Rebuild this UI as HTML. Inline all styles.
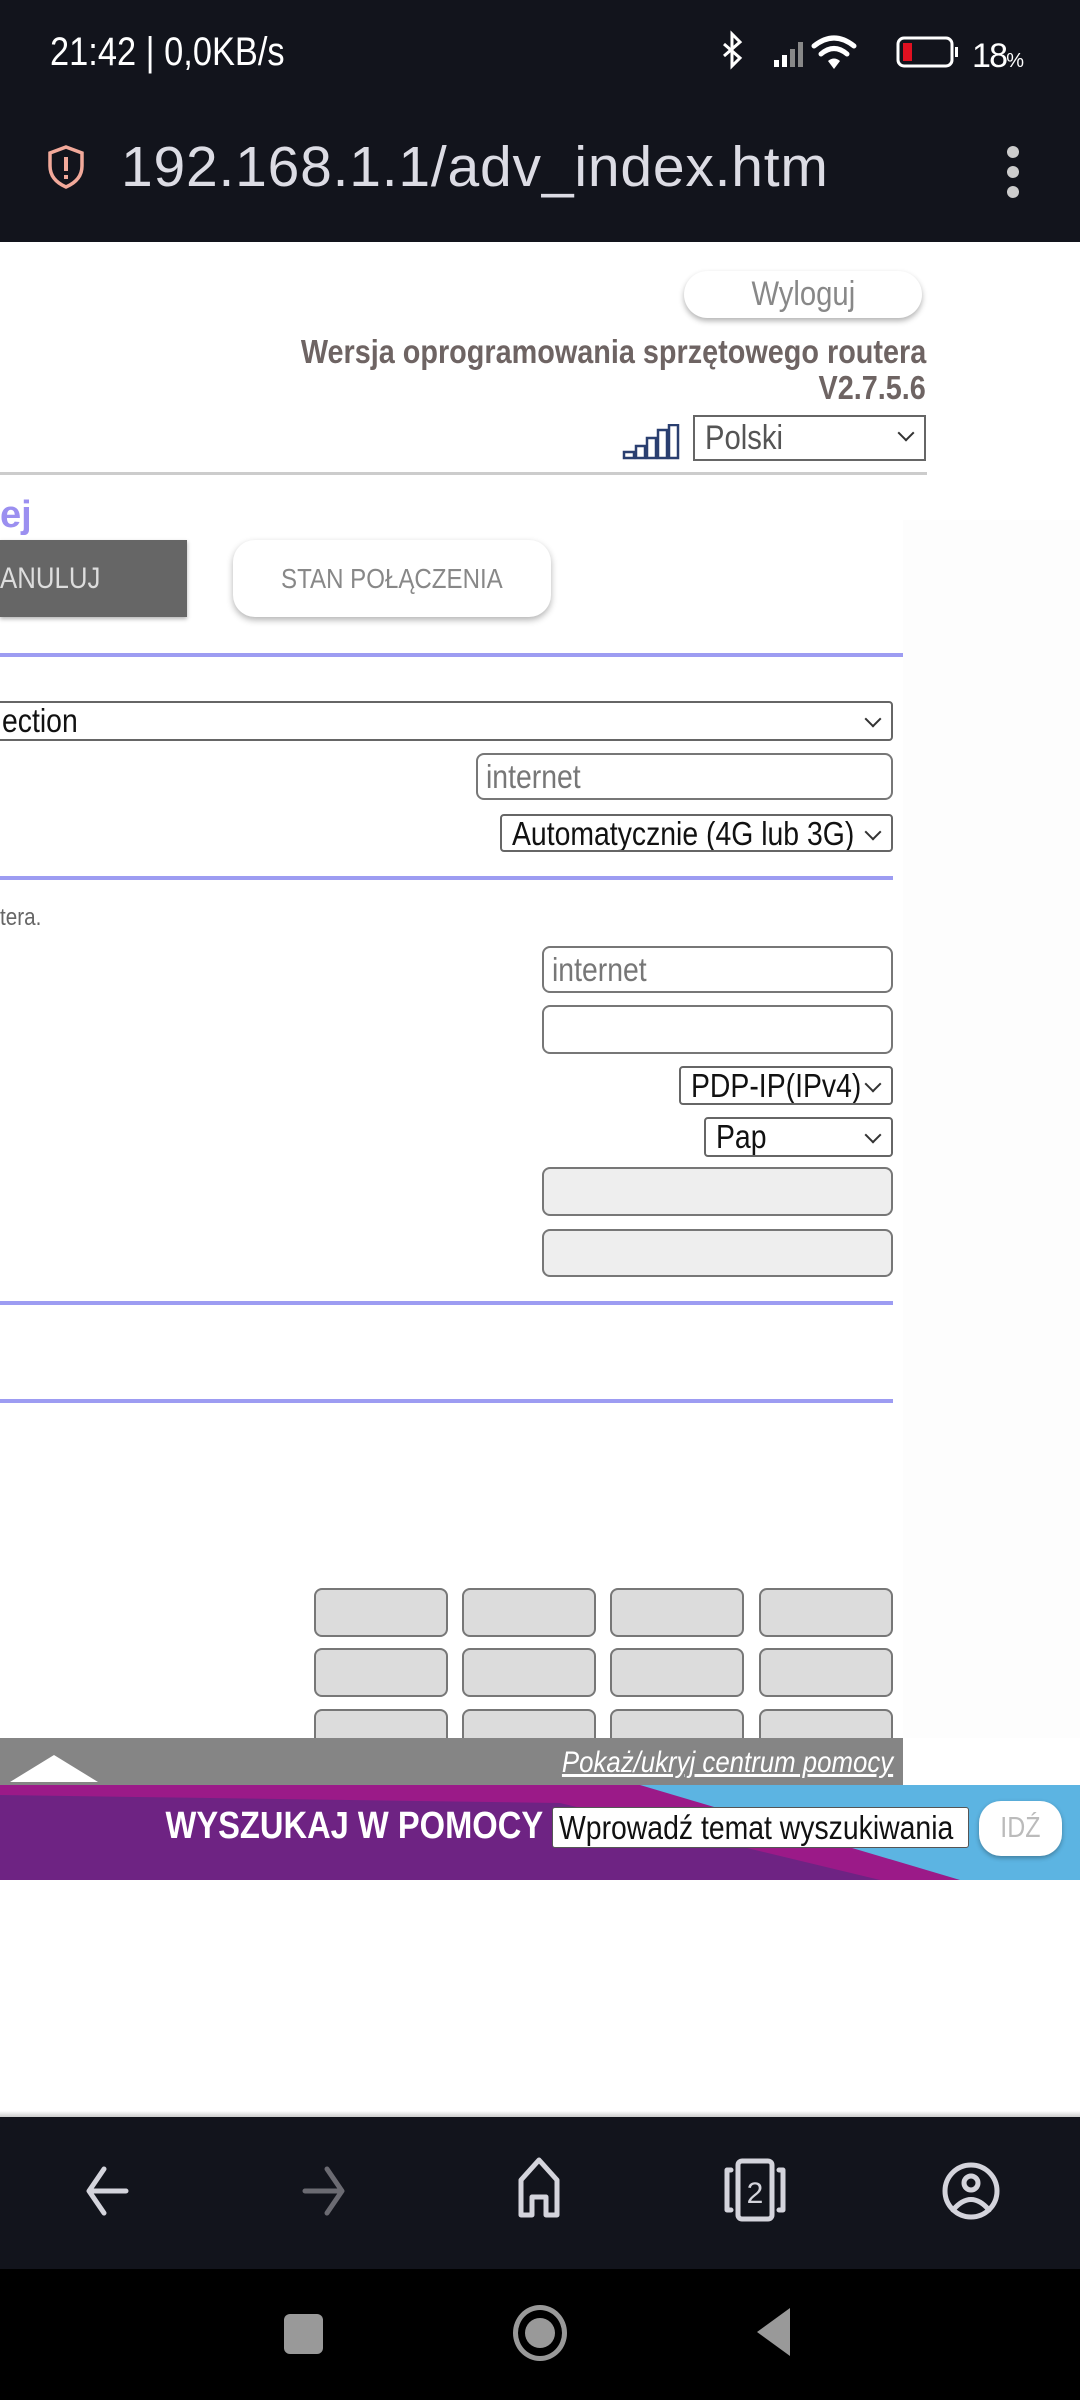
<!DOCTYPE html>
<html><head><meta charset="utf-8"><style>
*{margin:0;padding:0;box-sizing:border-box}
body{width:1080px;height:2400px;position:relative;background:#fff;overflow:hidden;font-family:"Liberation Sans",sans-serif}
.a{position:absolute;white-space:nowrap}
.dark{background:#12141c}
.box{position:absolute;border:2px solid #777;border-radius:8px;background:#fff}
.sel{position:absolute;border:2px solid #666;border-radius:4px;background:#fff;font-size:33px;color:#111;padding-left:10px;line-height:36px;white-space:nowrap;overflow:hidden}
.sel:after{content:"";position:absolute;right:12px;top:10px;width:10px;height:10px;border-right:2px solid #333;border-bottom:2px solid #333;transform:rotate(45deg)}
.pl{position:absolute;left:0;height:4px;background:#9d9cf2}
.gi{position:absolute;border:2px solid #777;border-radius:8px;background:#dcdcdc}
.n{display:inline-block;transform:scaleX(.86);transform-origin:left}
.nr{display:inline-block;transform:scaleX(.86);transform-origin:right}
</style></head><body>
<div class="a dark" style="left:0;top:0;width:1080px;height:242px"></div>
<div class="a" style="left:50px;top:30px;font-size:40px;color:#fff"><span class="n">21:42 | 0,0KB/s</span></div>
<svg class="a" style="left:720px;top:30px" width="340" height="50" viewBox="0 0 340 50">
<path d="M4 14 L20 28 L12 36 L12 4 L20 12 L4 26" stroke="#fff" stroke-width="3" fill="none"/>
<rect x="54" y="30" width="5" height="7" fill="#fff"/><rect x="62" y="25" width="5" height="12" fill="#fff"/><rect x="70" y="19" width="5" height="18" fill="#888"/><rect x="78" y="12" width="5" height="25" fill="#888"/>
<g fill="none" stroke="#fff" stroke-width="5" stroke-linecap="round"><path d="M94 16 Q114 0 134 16"/><path d="M101 24 Q114 13 127 24"/></g><path d="M108 31 Q114 26 120 31 L114 39 Z" fill="#fff"/>
<rect x="178" y="8" width="54" height="28" rx="6" fill="none" stroke="#fff" stroke-width="3"/><rect x="183" y="13" width="9" height="18" fill="#e01020"/><rect x="235" y="17" width="3" height="10" fill="#fff"/>
<text x="252" y="37" fill="#fff" font-size="34" font-family="Liberation Sans, sans-serif" textLength="52">18<tspan font-size="20">%</tspan></text>
</svg>
<svg class="a" style="left:46px;top:144px" width="40" height="46" viewBox="0 0 40 46"><path d="M20 3 L36 9 V22 Q36 36 20 43 Q4 36 4 22 V9 Z" fill="none" stroke="#f2a99a" stroke-width="3.5"/><rect x="18" y="13" width="4" height="14" fill="#f2a99a"/><rect x="18" y="31" width="4" height="4" fill="#f2a99a"/></svg>
<div class="a" style="left:121px;top:134px;font-size:57px;color:#dcdce4;letter-spacing:0.8px">192.168.1.1/adv_index.htm</div>
<div class="a" style="left:1007px;top:146px;width:12px;height:12px;border-radius:6px;background:#ccc;box-shadow:0 20px 0 #ccc,0 40px 0 #ccc"></div>

<div class="a" style="left:903px;top:520px;width:177px;height:1218px;background:#fdfdfd"></div>
<div class="a" style="left:684px;top:271px;width:238px;height:47px;border-radius:24px;background:#fff;box-shadow:0 3px 6px rgba(0,0,0,.3);text-align:center;font-size:34px;line-height:47px;color:#888"><span class="n" style="transform-origin:center">Wyloguj</span></div>
<div class="a" style="right:154px;top:335px;font-size:33.5px;font-weight:bold;color:#6e6463;text-align:right;line-height:36px"><span class="nr">Wersja oprogramowania sprzętowego routera</span><br><span class="nr">V2.7.5.6</span></div>
<svg class="a" style="left:622px;top:424px" width="58" height="36" viewBox="0 0 58 36"><g fill="none" stroke="#2a3f70" stroke-width="2.5"><rect x="2" y="28" width="10" height="6"/><rect x="14" y="22" width="9" height="12"/><rect x="25" y="14" width="9" height="20"/><rect x="36" y="6" width="9" height="28"/><rect x="47" y="1" width="9" height="33"/></g></svg>
<div class="sel" style="left:693px;top:415px;width:233px;height:46px;border-radius:0;line-height:42px;font-size:34px;color:#555"><span class="n">Polski</span></div>
<div class="a" style="left:0;top:472px;width:927px;height:3px;background:#ccc"></div>
<div class="a" style="left:0;top:494px;font-size:38px;font-weight:bold;color:#9b8ff0">ej</div>
<div class="a" style="left:0;top:540px;width:187px;height:77px;background:#666;box-shadow:0 2px 4px rgba(0,0,0,.3);color:#ddd;font-size:30px;line-height:77px"><span class="n">ANULUJ</span></div>
<div class="a" style="left:233px;top:540px;width:318px;height:77px;border-radius:22px;background:#fff;box-shadow:0 3px 7px rgba(0,0,0,.3);text-align:center;font-size:28px;line-height:77px;color:#888"><span class="n" style="transform-origin:center">STAN POŁĄCZENIA</span></div>
<div class="pl" style="top:653px;width:903px"></div>
<div class="sel" style="left:-10px;top:701px;width:903px;height:40px"><span class="n">ection</span></div>
<div class="box" style="left:476px;top:753px;width:417px;height:47px;font-size:33px;line-height:43px;color:#777;padding-left:8px"><span class="n">internet</span></div>
<div class="sel" style="left:500px;top:814px;width:393px;height:38px"><span class="n">Automatycznie (4G lub 3G)</span></div>
<div class="pl" style="top:876px;width:893px"></div>
<div class="a" style="left:0;top:904px;font-size:24px;color:#666"><span class="n">tera.</span></div>
<div class="box" style="left:542px;top:946px;width:351px;height:47px;font-size:33px;line-height:43px;color:#777;padding-left:8px"><span class="n">internet</span></div>
<div class="box" style="left:542px;top:1005px;width:351px;height:49px"></div>
<div class="sel" style="left:679px;top:1066px;width:214px;height:39px"><span class="n">PDP-IP(IPv4)</span></div>
<div class="sel" style="left:704px;top:1117px;width:189px;height:40px"><span class="n">Pap</span></div>
<div class="box" style="left:542px;top:1167px;width:351px;height:49px;background:#eee"></div>
<div class="box" style="left:542px;top:1229px;width:351px;height:48px;background:#eee"></div>
<div class="pl" style="top:1301px;width:893px"></div>
<div class="pl" style="top:1399px;width:893px"></div>
<div class="gi" style="left:314px;top:1588px;width:134px;height:49px"></div><div class="gi" style="left:462px;top:1588px;width:134px;height:49px"></div><div class="gi" style="left:610px;top:1588px;width:134px;height:49px"></div><div class="gi" style="left:759px;top:1588px;width:134px;height:49px"></div>
<div class="gi" style="left:314px;top:1648px;width:134px;height:49px"></div><div class="gi" style="left:462px;top:1648px;width:134px;height:49px"></div><div class="gi" style="left:610px;top:1648px;width:134px;height:49px"></div><div class="gi" style="left:759px;top:1648px;width:134px;height:49px"></div>
<div class="gi" style="left:314px;top:1709px;width:134px;height:49px"></div><div class="gi" style="left:462px;top:1709px;width:134px;height:49px"></div><div class="gi" style="left:610px;top:1709px;width:134px;height:49px"></div><div class="gi" style="left:759px;top:1709px;width:134px;height:49px"></div>
<div class="a" style="left:0;top:1738px;width:903px;height:47px;background:#858585"></div>
<div class="a" style="left:10px;top:1755px;width:0;height:0;border-left:44px solid transparent;border-right:44px solid transparent;border-bottom:27px solid #fff"></div>
<div class="a" style="right:187px;top:1746px;font-size:30px;font-style:italic;color:#fff"><span class="nr" style="text-decoration:underline">Pokaż/ukryj centrum pomocy</span></div>
<svg class="a" style="left:0;top:1785px" width="1080" height="95" viewBox="0 0 1080 95" preserveAspectRatio="none"><rect width="1080" height="95" fill="#6e2383"/><polygon points="0,0 650,0 960,95 880,95 560,18 0,10" fill="#9b1a88"/><polygon points="640,0 1080,0 1080,95 960,95" fill="#5cb4e2"/></svg>
<div class="a" style="right:537px;top:1805px;font-size:38px;font-weight:bold;color:#fff"><span class="nr">WYSZUKAJ W POMOCY</span></div>
<div class="a" style="left:552px;top:1807px;width:417px;height:41px;background:#fff;border:1px solid #555;border-radius:3px;font-size:33px;line-height:39px;color:#111;padding-left:6px;overflow:hidden"><span class="n">Wprowadź temat wyszukiwania</span></div>
<div class="a" style="left:979px;top:1801px;width:83px;height:55px;border-radius:22px;background:#fff;box-shadow:0 2px 5px rgba(0,0,0,.3);text-align:center;font-size:29px;line-height:55px;color:#bbb"><span class="n" style="transform-origin:center">IDŹ</span></div>

<div class="a" style="left:0;top:2111px;width:1080px;height:6px;background:linear-gradient(#fff,#ccc)"></div>
<div class="a dark" style="left:0;top:2117px;width:1080px;height:152px"></div>
<svg class="a" style="left:0;top:2117px" width="1080" height="152" viewBox="0 0 1080 152"><g fill="none" stroke-width="5" stroke-linecap="round" stroke-linejoin="round">
<path d="M90 74 L126 74 M104 52 L89 74 L104 96" stroke="#d4d4dc"/>
<path d="M305 74 L341 74 M327 52 L342 74 L327 96" stroke="#6b6b72"/>
<path d="M521 98 V63 L539 43 L557 63 V98 H546 V80 H532 V98 Z" stroke="#d4d4dc"/>
<rect x="738" y="44" width="34" height="58" rx="4" stroke="#d4d4dc"/><path d="M731 53 h-4 v40 h4 M779 53 h4 v40 h-4" stroke="#d4d4dc"/>
<circle cx="971" cy="74" r="26" stroke="#d4d4dc"/><circle cx="971" cy="66" r="7" stroke="#d4d4dc"/><path d="M953 93 Q971 72 989 93" stroke="#d4d4dc"/></g>
<text x="755" y="86" fill="#d4d4dc" font-size="30" text-anchor="middle" font-family="Liberation Sans, sans-serif">2</text></svg>
<div class="a" style="left:0;top:2269px;width:1080px;height:131px;background:#000"></div>
<div class="a" style="left:284px;top:2314px;width:39px;height:40px;border-radius:6px;background:#999"></div>
<div class="a" style="left:513px;top:2305px;width:54px;height:56px;border-radius:50%;border:5px solid #999"></div>
<div class="a" style="left:525px;top:2318px;width:30px;height:30px;border-radius:50%;background:#999"></div>
<div class="a" style="left:757px;top:2308px;width:0;height:0;border-top:24px solid transparent;border-bottom:24px solid transparent;border-right:33px solid #999"></div>
</body></html>
